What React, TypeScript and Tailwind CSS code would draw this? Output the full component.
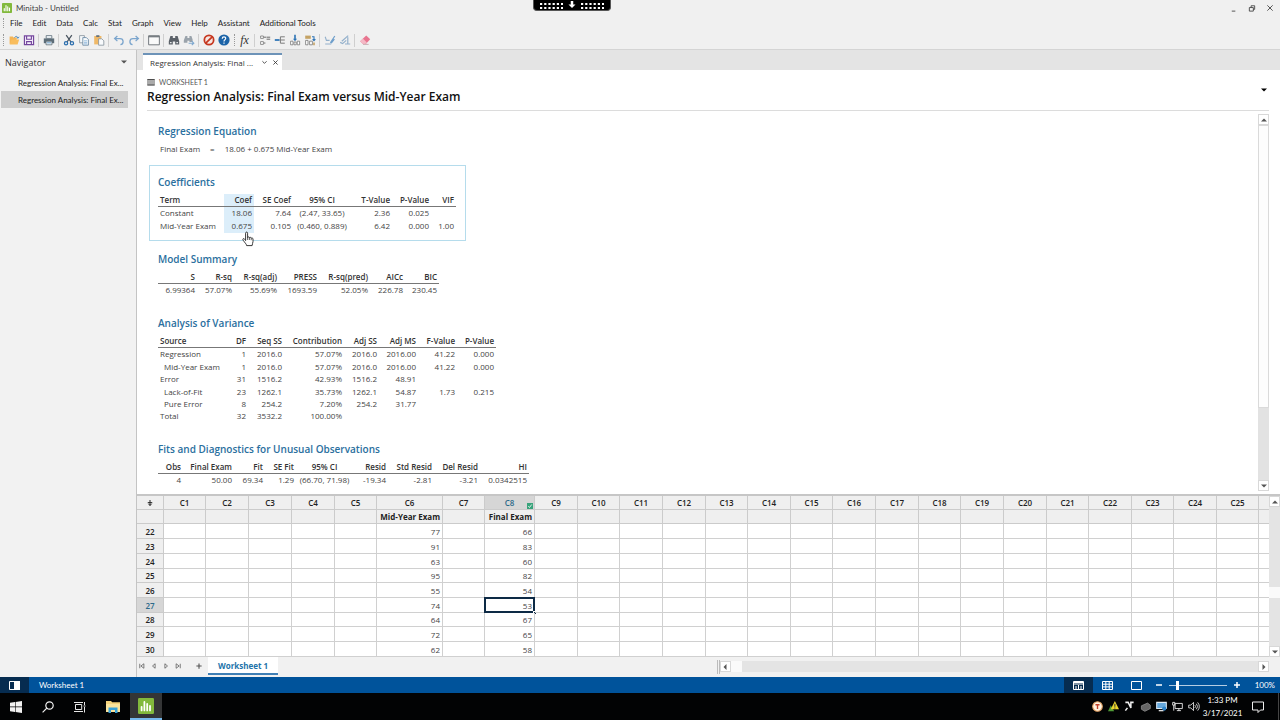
import React from "react";
import clsx from "clsx";

type Align = "left" | "center" | "right";
type Column = { label: string; width: string; align: Align };
type Row = { cells: string[]; indent?: boolean };

const alignClass: Record<Align, string> = {
  left: "text-left",
  center: "text-center",
  right: "text-right",
};

const col = (label: string, width: string, align: Align = "right"): Column => ({ label, width, align });

function StatTable({ label, columns, rows, highlight }: { label: string; columns: Column[]; rows: Row[]; highlight?: number }) {
  return (
    <table aria-label={label} className="table-fixed border-separate border-spacing-0 text-[8px] leading-[12px] whitespace-nowrap">
      <colgroup>
        {columns.map((c) => (
          <col key={c.label} className={c.width} />
        ))}
      </colgroup>
      <thead>
        <tr>
          {columns.map((c, i) => (
            <th
              key={c.label}
              scope="col"
              className={clsx(
                "border-b border-[#777] px-0.5 py-0 font-semibold text-[#333]",
                alignClass[c.align],
                i === highlight && "bg-[#dceefa]",
              )}
            >
              {c.label}
            </th>
          ))}
        </tr>
      </thead>
      <tbody className="text-[#444]">
        {rows.map((r, ri) => (
          <tr key={ri} className={r.indent ? "h-[12px]" : "h-[13px]"}>
            {r.cells.map((v, i) => (
              <td
                key={i}
                className={clsx(
                  "py-0 pr-0.5 align-top",
                  i === 0 && r.indent ? "pl-1.5" : "pl-0.5",
                  alignClass[columns[i].align],
                  i === highlight && "bg-[#dceefa]",
                )}
              >
                {v}
              </td>
            ))}
          </tr>
        ))}
      </tbody>
    </table>
  );
}

function Section({ title, selected, children }: { title: string; selected?: boolean; children: React.ReactNode }) {
  return (
    <section className={clsx("relative w-fit border pt-2 pr-[9px] pb-[7px] pl-2", selected ? "border-[#b5dcec]" : "border-transparent")}>
      <h2 className="mb-1 text-[10px] leading-4 font-semibold text-[#2a6f9e]">{title}</h2>
      {children}
    </section>
  );
}

function HandCursor() {
  return (
    <svg className="absolute top-[65px] left-[92px] h-4 w-3" viewBox="0 0 12 16" aria-hidden="true">
      <path
        d="M3.6 9.6V2.2c0-1.5 2-1.5 2 0v4.2c.4-.8 1.7-.6 1.8.3.5-.7 1.7-.4 1.8.5.6-.5 1.8-.2 1.8.8v2.6c0 1.6-.9 2.2-.9 4H4.6c0-1.300-1.300-2.300-2.200-3.700C1.500 9.700.3 8.600 1.100 7.800c.8-.7 1.700.3 2.500 1.800z"
        fill="#fff"
        stroke="#222"
        strokeWidth=".9"
      />
      <path d="M5.600 6v3M7.400 6.600v2.400M9.200 7.200v2" stroke="#222" strokeWidth=".7" fill="none" />
    </svg>
  );
}

function Arrow({ dir, className = "text-[#555]" }: { dir: "up" | "down" | "left" | "right"; className?: string }) {
  const d = { up: "M0 6h8L4 2z", down: "M0 2h8L4 6z", left: "M6 0v8L2 4z", right: "M2 0v8l4-4z" }[dir];
  return (
    <svg viewBox="0 0 8 8" className={clsx("size-1.5 fill-current", className)} aria-hidden="true">
      <path d={d} />
    </svg>
  );
}

function ScrollButton({ dir, label }: { dir: "up" | "down" | "left" | "right"; label: string }) {
  return (
    <button type="button" aria-label={label} className="flex size-[11px] shrink-0 items-center justify-center border border-[#d8d8d8] bg-white">
      <Arrow dir={dir} />
    </button>
  );
}

const icons: Record<string, React.ReactNode> = {
  Open: (
    <>
      <path d="M2 12.500V3h4l1 1.500h4V7" fill="#f5b556" />
      <path d="M4.500 7H14l-2 6H2z" fill="#f9bd5d" />
      <path d="M8 4.500c2-2.500 4-1.500 4.500.5M10.800 4l1.800 1.400L13.800 3.500" fill="none" stroke="#3a7cb8" />
    </>
  ),
  Save: (
    <>
      <path d="M1.800 2.300h11.400v11H1.800z" fill="#f5effa" stroke="#74469d" strokeWidth="1.500" />
      <path d="M4.500 2.500v4h6v-4M4.500 13v-3.500h6V13" fill="none" stroke="#74469d" strokeWidth="1.400" />
    </>
  ),
  Print: (
    <>
      <path d="M1 5.500h13v6H1z" fill="#5d6d78" />
      <path d="M4 2h7v3.500H4zM3.800 9h7.400v4.500H3.800z" fill="#eef4f8" stroke="#5d6d78" />
      <path d="M5 11h5" stroke="#4b8ac0" />
    </>
  ),
  Cut: (
    <>
      <path d="M4 1.500l6 8.500M11 1.500L5 10" stroke="#4a5560" strokeWidth="1.600" fill="none" />
      <circle cx="3.800" cy="11.500" r="2" fill="none" stroke="#2c6fae" strokeWidth="1.600" />
      <circle cx="11.200" cy="11.500" r="2" fill="none" stroke="#2c6fae" strokeWidth="1.600" />
    </>
  ),
  Copy: (
    <>
      <path d="M2 2h6v9H2z" fill="#f5f8fa" stroke="#84909a" />
      <path d="M6 4.500h4.500l2.500 2.500v7H6z" fill="#f8fbfd" stroke="#5d7f9d" />
      <path d="M7.500 8.500h4M7.500 10.500h4M7.500 12.300h4" stroke="#6c9fce" strokeWidth=".8" />
    </>
  ),
  Paste: (
    <>
      <path d="M1.500 2.500h9v10.500h-9z" fill="#efb867" />
      <path d="M4 1.500h4v2.300H4z" fill="#66717a" />
      <path d="M7 6h4l2.500 2.500V14H7z" fill="#f8fafc" stroke="#84909a" />
    </>
  ),
  Undo: <path d="M5.500 2.500L2 5.700l3.500 3.200M2.300 5.700h6.500c5 0 5 7 .5 7.500" fill="none" stroke="#7ba5cd" strokeWidth="1.600" />,
  Redo: <path d="M9.500 2.500L13 5.700 9.500 8.900M12.700 5.700H6.200c-5 0-5 7-.5 7.500" fill="none" stroke="#7ba5cd" strokeWidth="1.600" />,
  Window: (
    <>
      <path d="M.8 2.200h13.400v11.300H.8z" fill="#fafafa" stroke="#70767b" strokeWidth="1.200" />
      <path d="M.8 2.200h13.400v2H.8z" fill="#777d82" />
    </>
  ),
  Find: (
    <>
      <path d="M3 2.500h3V5h3V2.500h3L14 9v4H9V9.500H6V13H1V9z" fill="#5b6168" />
      <path d="M2.500 10h2v1.500h-2zM10.500 10h2v1.500h-2z" fill="#e5e8ea" />
    </>
  ),
  Replace: (
    <>
      <path d="M3 2.500h2.500V5H8V2.500h2.500L12 7v3H8V8.500H5.500V11H1V8z" fill="#9aa3ab" />
      <path d="M7 11.500h6M11 9l2.500 2.500L11 14" fill="none" stroke="#7fa9d0" strokeWidth="1.400" />
    </>
  ),
  Cancel: (
    <>
      <circle cx="7.500" cy="7.500" r="5.800" fill="#f7e7e3" stroke="#c6371f" strokeWidth="2.200" />
      <path d="M11.500 3.500l-8 8" stroke="#c6371f" strokeWidth="2.200" />
    </>
  ),
  Help: (
    <>
      <circle cx="7.500" cy="7.500" r="7" fill="#1c64a8" />
      <path d="M5.300 5.800c0-3 4.500-2.800 4.300-.2C9.500 7.300 7.500 7 7.500 9.300M7.500 10.500v1.800" fill="none" stroke="#fff" strokeWidth="1.500" />
    </>
  ),
  "Sum columns": (
    <>
      <path d="M2 2.500h3.500v3H2zM2 9.500h3.500v3.500H2z" fill="#fff" stroke="#777" />
      <path d="M6 4h3M9.500 4H14M9.500 6.500H14M6 11.300h2" stroke="#666" strokeWidth="1.200" />
    </>
  ),
  "Split rows": (
    <>
      <path d="M1 7.500h6" stroke="#2c73b5" strokeWidth="2.200" />
      <path d="M8 3.500h5.500M8 7.500h5.500M8 11.500h5.500M8 3.500v8" stroke="#777" strokeWidth="1.200" fill="none" />
    </>
  ),
  "Insert rows": (
    <>
      <path d="M7.500 1v6.500" stroke="#2c73b5" strokeWidth="2" />
      <path d="M5 6h5l-2.500 3z" fill="#2c73b5" />
      <path d="M2 9h3v4.500H2zM6.300 10h2.700v3.500H6.300zM10.300 9h3v4.500h-3z" fill="#fff" stroke="#777" />
    </>
  ),
  "Move columns": (
    <>
      <path d="M1.500 2h7v4h-7z" fill="#c4a264" />
      <path d="M10 3.500h2.500V8M10.800 6.500l1.700 2 1.700-2" fill="none" stroke="#2c73b5" strokeWidth="1.300" />
      <path d="M2 8h3v5.500H2zM7 9h3.500v4.500H7z" fill="#fff" stroke="#777" />
      <path d="M11.500 10.500h2V14h-2z" fill="#c4a264" />
    </>
  ),
  "Assign formula": (
    <>
      <path d="M1.500 3.500l1.500 4.500h4M1.500 12.500H9" fill="none" stroke="#93b0cb" strokeWidth="1.400" />
      <path d="M8 11l5.500-8.500M9 11.500l4-5" fill="none" stroke="#6f9fcb" strokeWidth="1.500" />
    </>
  ),
  "Edit formula": <path d="M3.500 9l8-7M1.500 10.500l3 1.500L9 8M11 4v9M7.500 12.500H14" fill="none" stroke="#93b0cb" strokeWidth="1.500" />,
  Erase: (
    <>
      <path d="M9 2l5 4.500-5.500 6H5L1.500 9z" fill="#e8758f" />
      <path d="M1.500 9L4.800 5.700l5 4.800-1.800 2H5z" fill="#f5b8c5" />
      <path d="M5 13h7" stroke="#b2848e" strokeWidth=".8" />
    </>
  ),
};

function ToolIcon({ name }: { name: string }) {
  return (
    <button type="button" aria-label={name} className="flex h-4 w-[15px] items-center justify-center">
      {name === "Formula" ? (
        <span className="font-['Liberation_Serif',serif] text-[12px] leading-none text-[#333] italic">fx</span>
      ) : (
        <svg viewBox="0 0 15 15" className="size-3" aria-hidden="true">
          {icons[name]}
        </svg>
      )}
    </button>
  );
}

function Grip() {
  return <span className="mx-0.5 h-3 w-0 border-l border-dotted border-[#999]" />;
}

const toolGroups = [
  ["Open", "Save"],
  ["Print"],
  ["Cut", "Copy", "Paste"],
  ["Undo", "Redo"],
  ["Window"],
  ["Find", "Replace"],
  ["Cancel", "Help"],
];
const formulaGroups = [
  ["Formula"],
  ["Sum columns", "Split rows", "Insert rows", "Move columns"],
  ["Assign formula", "Edit formula"],
  ["Erase"],
];

function ToolGroups({ groups }: { groups: string[][] }) {
  return (
    <>
      {groups.map((g, i) => (
        <React.Fragment key={i}>
          {i > 0 && <span className="mx-0.5 h-[13px] w-px bg-[#cfcfcf]" />}
          {g.map((n) => (
            <ToolIcon key={n} name={n} />
          ))}
        </React.Fragment>
      ))}
    </>
  );
}

function MinitabLogo({ className }: { className: string }) {
  return (
    <svg viewBox="0 0 20 20" className={className} aria-hidden="true">
      <rect width="20" height="20" rx="1.500" fill="#82b93c" />
      <path d="M4.500 15.500V11M8 15.500V5M11.500 15.500V7.500M15 15.500V10" stroke="#fff" strokeWidth="2.200" strokeLinecap="round" />
    </svg>
  );
}

const menus = ["File", "Edit", "Data", "Calc", "Stat", "Graph", "View", "Help", "Assistant", "Additional Tools"];

const midYear = ["77", "91", "63", "95", "55", "74", "64", "72", "62"];
const finalExam = ["66", "83", "60", "82", "54", "53", "67", "65", "58"];
const rowHeights = ["h-[15px]", "h-[15px]", "h-[15px]", "h-[14px]", "h-[15px]", "h-[15px]", "h-[14px]", "h-[15px]", "h-[15px]"];

const sheetColumns = Array.from({ length: 25 }, (_, i) => {
  const n = i + 1;
  const width = n === 6 ? "w-[66px]" : n === 8 ? "w-[50px]" : [1, 5, 7, 10, 13, 15, 18, 21, 23, 25].includes(n) ? "w-[42px]" : "w-[43px]";
  return { id: `C${n}`, width, name: n === 6 ? "Mid-Year Exam" : n === 8 ? "Final Exam" : "" };
});

function Worksheet() {
  return (
    <table aria-label="Worksheet 1" className="w-full table-fixed border-separate border-spacing-0 text-[8px] leading-[12px] whitespace-nowrap">
      <colgroup>
        <col className="w-[27px]" />
        {sheetColumns.map((c) => (
          <col key={c.id} className={c.width} />
        ))}
        <col />
      </colgroup>
      <thead>
        <tr className="h-[14px] bg-[#efefef] text-[#222]">
          <th className="border-r border-b border-[#cbcbcb] p-0">
            <svg viewBox="0 0 8 8" className="mx-auto size-1.5" aria-label="Data direction down">
              <path d="M4 0v7M1 3.500h6M2 5l2 2.500L6 5" fill="none" stroke="#222" strokeWidth="1.300" />
            </svg>
          </th>
          {sheetColumns.map((c) => (
            <th
              key={c.id}
              scope="col"
              className={clsx("relative border-r border-b border-[#cbcbcb] p-0 pt-px font-semibold", c.id === "C8" && "bg-[#d6d6d6] text-[#2c6a8a]")}
            >
              {c.id}
              {c.id === "C8" && (
                <svg viewBox="0 0 6 6" className="absolute right-px bottom-0 size-1.5" aria-hidden="true">
                  <path d="M0 0h6v6H0z" fill="#39a37b" />
                  <path d="M1.300 3l1.200 1.500 2.200-3" fill="none" stroke="#fff" strokeWidth=".8" />
                </svg>
              )}
            </th>
          ))}
          <th className="border-b border-[#cbcbcb] p-0" />
        </tr>
        <tr className="h-[14px] bg-[#efefef] text-[#222]">
          <th className="border-r border-b border-[#cbcbcb] p-0" />
          {sheetColumns.map((c) => (
            <th key={c.id} className="overflow-hidden border-r border-b border-[#cbcbcb] pt-px pr-0.5 pb-0 pl-0 text-right font-bold">
              {c.name}
            </th>
          ))}
          <th className="border-b border-[#cbcbcb] p-0" />
        </tr>
      </thead>
      <tbody className="bg-white text-[#444]">
        {midYear.map((m, i) => {
          const n = 22 + i;
          return (
            <tr key={n} className={rowHeights[i]}>
              <th
                scope="row"
                className={clsx(
                  "border-r border-b border-[#cbcbcb] p-0 pt-px font-semibold",
                  n === 27 ? "bg-[#d6d6d6] text-[#2c6a8a]" : "bg-[#efefef] text-[#222]",
                )}
              >
                {n}
              </th>
              {sheetColumns.map((c) => {
                const active = n === 27 && c.id === "C8";
                return (
                  <td key={c.id} className="relative border-r border-b border-[#d0d0d0] pt-px pr-0.5 pb-0 pl-0 text-right">
                    {c.id === "C6" ? m : c.id === "C8" ? finalExam[i] : ""}
                    {active && (
                      <span className="pointer-events-none absolute -inset-px border-2 border-[#0d2a45]">
                        <span className="absolute -right-[3px] -bottom-[3px] size-[3px] border-t border-l border-white bg-[#0d2a45]" />
                      </span>
                    )}
                  </td>
                );
              })}
              <td className="border-b border-[#d0d0d0] p-0" />
            </tr>
          );
        })}
      </tbody>
    </table>
  );
}

function Tray() {
  return (
    <div className="flex items-center">
      {[
        <>
          <circle cx="8" cy="8" r="7" fill="#fff2e0" stroke="#e2a060" strokeWidth="1.500" />
          <path d="M5 5.500h6M8 5.500v6" stroke="#c14129" strokeWidth="2" />
        </>,
        <>
          <path d="M0 15l4-9 5 9z" fill="#4f9a36" />
          <path d="M10 0l6 12H4z" fill="#ebd52d" />
          <path d="M10 4v4.500M10 9.500v1.500" stroke="#333" strokeWidth="1.500" />
        </>,
        <path d="M2 2h4l4 8V2h4M2 14l3-4" fill="none" stroke="#eee" strokeWidth="2.200" />,
        <path d="M2 7l9-4 4 3v5l-8 4-5-3z" fill="#666" stroke="#999" />,
        <>
          <path d="M1 2h14v9H1z" fill="#65a8dc" stroke="#dfeaf2" strokeWidth="1.500" />
          <path d="M4 14h7" stroke="#ddd" strokeWidth="2" />
          <circle cx="12" cy="11" r="3" fill="#2d83c8" />
        </>,
        <path d="M4.500 3.500H15v7.500H4.500V3.500M10 11v3M7 14h6M1 2h3v4H1zM2.500 6v8" fill="none" stroke="#eee" strokeWidth="1.300" />,
        <path d="M1 6h3l4-4v12l-4-4H1zM10 6q2 2 0 4M12 4q4 4 0 8M14 2q5 6 0 12" fill="none" stroke="#eee" strokeWidth="1.200" />,
      ].map((icon, i) => (
        <button
          key={i}
          type="button"
          aria-label={["Updates", "Alerts", "Network client", "Device", "Display", "Ethernet", "Volume"][i]}
          className="flex w-4 justify-center"
        >
          <svg viewBox="0 0 16 16" className="size-[11px] overflow-visible" aria-hidden="true">
            {icon}
          </svg>
        </button>
      ))}
    </div>
  );
}

export default function App() {
  return (
    <div className="relative flex h-screen flex-col overflow-hidden bg-[#f0f0f0] font-['Open_Sans','Noto_Sans',sans-serif] text-[8px] leading-[12px] text-[#222]">
      <div className="absolute top-0 left-1/2 flex h-[11px] w-[78px] -translate-x-[107px] items-center justify-center rounded-b-sm border border-t-0 border-[#555] bg-black">
        <svg viewBox="0 0 66 9" className="h-[9px] w-[66px]" aria-hidden="true">
          <path d="M1 3h23M42 3h23M1 7h23M42 7h23" stroke="#fff" strokeWidth="2" strokeDasharray="2.200 2" />
          <path d="M33 0v4" stroke="#fff" strokeWidth="2.500" />
          <path d="M29.500 3.500h7L33 7z" fill="#fff" />
        </svg>
      </div>

      <header className="shrink-0 border-b border-[#d4d4d4]">
        <div className="flex h-[15px] items-center justify-between pr-[5px] pl-0.5">
          <div className="flex items-center gap-1">
            <MinitabLogo className="size-2.5" />
            <h1 className="font-['Lato',sans-serif] text-[8px] text-[#444]">Minitab - Untitled</h1>
          </div>
          <div className="flex gap-2">
            {["M2 8h4", "M1.500 4h4.500v4H1.500zM3.500 4V2h4v4H6", "M1.500 1.500l6 6M7.500 1.500l-6 6"].map((d, i) => (
              <button key={d} type="button" aria-label={["Minimize", "Restore", "Close"][i]} className="flex w-2.5 justify-center">
                <svg viewBox="0 0 9 9" className="size-2" fill="none" stroke="#444" aria-hidden="true">
                  <path d={d} />
                </svg>
              </button>
            ))}
          </div>
        </div>
        <nav className="flex h-4 items-center gap-2.5 pl-[3px] font-['Lato',sans-serif]">
          <span className="-mr-1 h-2.5 border-l border-dotted border-[#999]" />
          {menus.map((m) => (
            <button key={m} type="button">
              {m}
            </button>
          ))}
        </nav>
        <div className="flex h-[18px] items-center pl-px">
          <Grip />
          <ToolGroups groups={toolGroups} />
          <span className="w-px" />
          <Grip />
          <ToolGroups groups={formulaGroups} />
        </div>
      </header>

      <div className="flex min-h-0 flex-1">
        <aside className="w-[137px] shrink-0 border-r border-[#c4c4c4] bg-[#f2f2f2]">
          <div className="flex h-6 items-center justify-between pr-[9px] pl-[5px]">
            <h2 className="pt-px text-[9px] text-[#333]">Navigator</h2>
            <Arrow dir="down" />
          </div>
          <ul className="px-px font-['Lato',sans-serif]">
            {[false, true].map((on, i) => (
              <li key={i} className="mr-[7px]">
                <button type="button" className={clsx("h-[17px] w-full pl-[17px] text-left whitespace-nowrap", on && "bg-[#cdcdcd]")}>
                  Regression Analysis: Final Ex...
                </button>
              </li>
            ))}
          </ul>
        </aside>

        <main className="flex min-w-0 flex-1 flex-col">
          <div className="flex h-5 shrink-0 items-end bg-[#e4e4e4] pl-1.5">
            <div className="flex h-[17px] items-center border-t-2 border-[#6d93b8] bg-white pr-1 pl-[7px] text-[#333]">
              <span className="w-[110px] whitespace-nowrap">Regression Analysis: Final ...</span>
              <button type="button" aria-label="Tab menu" className="flex w-2 justify-center">
                <svg viewBox="0 0 6 6" className="size-[5px]" fill="none" stroke="#333" aria-hidden="true">
                  <path d="M.5 1.500L3 4l2.500-2.500" />
                </svg>
              </button>
              <button type="button" aria-label="Close tab" className="ml-1 flex w-1.5 justify-center">
                <svg viewBox="0 0 6 6" className="size-[5px]" fill="none" stroke="#333" aria-hidden="true">
                  <path d="M.5.5l5 5M5.500.5l-5 5" />
                </svg>
              </button>
            </div>
          </div>

          <div className="flex min-h-0 flex-1 flex-col bg-white pr-[11px]">
            <div className="ml-2.5 flex shrink-0 items-center justify-between border-b border-[#dcdcdc] pt-1.5 pr-0.5 pb-1">
              <div>
                <p className="flex items-center gap-1 text-[#555]">
                  <svg viewBox="0 0 8 8" className="size-2" aria-hidden="true">
                    <path d="M1 1v6.500M3 1v6.500M5 1v6.500M7 1v6.500M.5 1.500h7M.5 7h7" fill="none" stroke="#444" strokeWidth=".9" />
                  </svg>
                  <span className="font-['Lato',sans-serif] text-[7px]">WORKSHEET 1</span>
                </p>
                <h1 className="text-[12px] leading-[18px] font-semibold text-[#111]">Regression Analysis: Final Exam versus Mid-Year Exam</h1>
              </div>
              <button type="button" aria-label="Output options" className="mb-0.5 flex">
                <Arrow dir="down" className="text-black" />
              </button>
            </div>

            <div className="flex min-h-0 flex-1 justify-between">
              <div className="flex min-w-0 flex-1 flex-col gap-px overflow-hidden pt-[3px] pl-3">
                <Section title="Regression Equation">
                  <div className="flex h-[13px] items-start gap-2.5 pl-0.5 text-[#444]">
                    <span>Final Exam</span>
                    <span>=</span>
                    <span>18.06 + 0.675 Mid-Year Exam</span>
                  </div>
                </Section>
                <Section title="Coefficients" selected>
                  <StatTable
                    label="Coefficients"
                    highlight={1}
                    columns={[
                      col("Term", "w-[66px]", "left"),
                      col("Coef", "w-[30px]"),
                      col("SE Coef", "w-[39px]"),
                      col("95% CI", "w-[58px]", "center"),
                      col("T-Value", "w-[41px]"),
                      col("P-Value", "w-[39px]"),
                      col("VIF", "w-[25px]"),
                    ]}
                    rows={[
                      { cells: ["Constant", "18.06", "7.64", "(2.47, 33.65)", "2.36", "0.025", ""] },
                      { cells: ["Mid-Year Exam", "0.675", "0.105", "(0.460, 0.889)", "6.42", "0.000", "1.00"] },
                    ]}
                  />
                  <HandCursor />
                </Section>
                <Section title="Model Summary">
                  <StatTable
                    label="Model Summary"
                    columns={[
                      col("S", "w-[39px]"),
                      col("R-sq", "w-[37px]"),
                      col("R-sq(adj)", "w-[45px]"),
                      col("PRESS", "w-[40px]"),
                      col("R-sq(pred)", "w-[51px]"),
                      col("AICc", "w-[35px]"),
                      col("BIC", "w-[34px]"),
                    ]}
                    rows={[{ cells: ["6.99364", "57.07%", "55.69%", "1693.59", "52.05%", "226.78", "230.45"] }]}
                  />
                </Section>
                <Section title="Analysis of Variance">
                  <StatTable
                    label="Analysis of Variance"
                    columns={[
                      col("Source", "w-[72px]", "left"),
                      col("DF", "w-[18px]"),
                      col("Seq SS", "w-[36px]"),
                      col("Contribution", "w-[60px]"),
                      col("Adj SS", "w-[35px]"),
                      col("Adj MS", "w-[39px]"),
                      col("F-Value", "w-[39px]"),
                      col("P-Value", "w-[39px]"),
                    ]}
                    rows={[
                      { cells: ["Regression", "1", "2016.0", "57.07%", "2016.0", "2016.00", "41.22", "0.000"] },
                      { cells: ["Mid-Year Exam", "1", "2016.0", "57.07%", "2016.0", "2016.00", "41.22", "0.000"], indent: true },
                      { cells: ["Error", "31", "1516.2", "42.93%", "1516.2", "48.91", "", ""] },
                      { cells: ["Lack-of-Fit", "23", "1262.1", "35.73%", "1262.1", "54.87", "1.73", "0.215"], indent: true },
                      { cells: ["Pure Error", "8", "254.2", "7.20%", "254.2", "31.77", "", ""] },
                      { cells: ["Total", "32", "3532.2", "100.00%", "", "", "", ""] },
                    ].map((r) => (r.cells[0] === "Pure Error" ? { ...r, indent: true } : r))}
                  />
                </Section>
                <Section title="Fits and Diagnostics for Unusual Observations">
                  <StatTable
                    label="Fits and Diagnostics"
                    columns={[
                      col("Obs", "w-[25px]"),
                      col("Final Exam", "w-[51px]"),
                      col("Fit", "w-[31px]"),
                      col("SE Fit", "w-[31px]"),
                      col("95% CI", "w-[57px]", "center"),
                      col("Resid", "w-[35px]"),
                      col("Std Resid", "w-[46px]"),
                      col("Del Resid", "w-[46px]"),
                      col("HI", "w-[49px]"),
                    ]}
                    rows={[{ cells: ["4", "50.00", "69.34", "1.29", "(66.70, 71.98)", "-19.34", "-2.81", "-3.21", "0.0342515"] }]}
                  />
                </Section>
              </div>
              <div className="mt-[3px] mb-[3px] flex w-[11px] shrink-0 flex-col bg-[#e2e2e2]">
                <ScrollButton dir="up" label="Scroll output up" />
                <div className="h-3/4 border border-[#dadada] bg-[#fdfdfd]" />
                <div className="flex-1" />
                <ScrollButton dir="down" label="Scroll output down" />
              </div>
            </div>
          </div>

          <div className="flex shrink-0 border-t-2 border-[#c6c6c6]">
            <div className="min-w-0 flex-1 overflow-hidden">
              <Worksheet />
            </div>
            <div className="flex w-[11px] shrink-0 flex-col bg-[#e4e4e4]">
              <ScrollButton dir="up" label="Scroll worksheet up" />
              <div className="flex-[5]" />
              <div className="h-[11px] bg-[#fafafa]" />
              <div className="flex-[3]" />
              <ScrollButton dir="down" label="Scroll worksheet down" />
            </div>
          </div>

          <div className="flex h-5 shrink-0 bg-[#f1f1f1]">
            <div className="flex items-center gap-1.5 pr-1.5 pb-0.5 pl-0.5 text-[#555]">
              {["M1 1v6M6.500 1L2.500 4l4 3z", "M5.500 1L2 4l3.500 3z", "M2.500 1L6 4 2.500 7z", "M7 1v6M1.500 1l4 3-4 3z"].map((d, i) => (
                <button key={d} type="button" aria-label={["First sheet", "Previous sheet", "Next sheet", "Last sheet"][i]}>
                  <svg viewBox="0 0 8 8" className="size-1.5" fill="none" stroke="currentColor" aria-hidden="true">
                    <path d={d} />
                  </svg>
                </button>
              ))}
              <button type="button" aria-label="Add sheet" className="ml-[9px]">
                <svg viewBox="0 0 8 8" className="size-1.5" fill="none" stroke="currentColor" strokeWidth="1.500" aria-hidden="true">
                  <path d="M4 .5v7M.5 4h7" />
                </svg>
              </button>
            </div>
            <button type="button" className="h-[18px] border-b-2 border-[#3f7fb5] bg-white px-2.5 pt-0.5 font-bold text-[#2273aa]">
              Worksheet 1
            </button>
            <div className="flex-1" />
            <div className="flex h-5 w-[calc(50%-8px)] items-center pr-[11px] pb-px">
              <span className="h-3.5 w-[3px] shrink-0 border-x border-[#bbb]" />
              <ScrollButton dir="left" label="Scroll worksheet left" />
              <div className="flex h-[11px] flex-1 bg-[#e4e4e4]">
                <div className="w-[11px] bg-[#fafafa]" />
              </div>
              <ScrollButton dir="right" label="Scroll worksheet right" />
            </div>
          </div>
        </main>
      </div>

      <div className="flex h-4 shrink-0 items-center justify-between bg-[#00539b] font-['Lato',sans-serif] text-white">
        <div className="flex h-full items-center gap-2.5">
          <button type="button" aria-label="Toggle navigator" className="flex h-full w-[29px] items-center justify-center bg-[#062c50]">
            <svg viewBox="0 0 11 9" className="h-[9px] w-[11px]" aria-hidden="true">
              <path d="M.5.5h10v8H.5z" fill="none" stroke="#fff" />
              <path d="M5 0h6v9H5z" fill="#fff" />
            </svg>
          </button>
          <span>Worksheet 1</span>
        </div>
        <div className="flex h-full items-center pr-[5px]">
          {[
            "M.5.5h10v8H.5zM.5 1.500h10M.5 3h10M3 5v3.500M5.500 4v4.500M8 5v3.500",
            "M.5.5h10v8H.5zM.5 3.200h10M.5 5.900h10M3.800.5v8M7.200.5v8",
            "M.5.5h10v8H.5z",
          ].map((d, i) => (
            <button
              key={d}
              type="button"
              aria-label={["Split view", "Worksheet view", "Output view"][i]}
              className={clsx("flex h-full w-[29px] items-center justify-center", i === 0 && "bg-[#062c50]")}
            >
              <svg viewBox="0 0 11 9" className="h-[9px] w-[11px]" fill="none" stroke="#fff" aria-hidden="true">
                <path d={d} />
              </svg>
            </button>
          ))}
          <button type="button" aria-label="Zoom out" className="ml-1 flex size-2 items-center justify-center">
            <svg viewBox="0 0 6 6" className="size-1.5" stroke="#fff" strokeWidth="1.500" aria-hidden="true">
              <path d="M0 3h6" />
            </svg>
          </button>
          <input
            type="range"
            aria-label="Zoom"
            min={0}
            max={100}
            defaultValue={14}
            className="mx-1.5 h-[9px] w-[58px] appearance-none bg-transparent [&::-webkit-slider-runnable-track]:h-px [&::-webkit-slider-runnable-track]:bg-[#b5cde3] [&::-webkit-slider-thumb]:-mt-1 [&::-webkit-slider-thumb]:h-[9px] [&::-webkit-slider-thumb]:w-[3px] [&::-webkit-slider-thumb]:appearance-none [&::-webkit-slider-thumb]:bg-white"
          />
          <button type="button" aria-label="Zoom in" className="flex size-2 items-center justify-center">
            <svg viewBox="0 0 6 6" className="size-1.5" stroke="#fff" strokeWidth="1.500" aria-hidden="true">
              <path d="M0 3h6M3 0v6" />
            </svg>
          </button>
          <span className="ml-3.5">100%</span>
        </div>
      </div>

      <footer className="flex h-[27px] shrink-0 items-stretch justify-between bg-[#020304] text-white">
        <div className="flex">
          <button type="button" aria-label="Start" className="flex w-8 items-center justify-center">
            <svg viewBox="0 0 12 12" className="size-3" fill="#f2f2f2" aria-hidden="true">
              <path d="M0 1.800L5 1v4.600H0zM5.600.9L12 0v5.600H5.600zM0 6.300h5V11l-5-.8zM5.600 6.300H12V12l-6.400-.9z" />
            </svg>
          </button>
          <button type="button" aria-label="Search" className="flex w-8 items-center justify-center">
            <svg viewBox="0 0 12 12" className="size-3" fill="none" stroke="#f2f2f2" strokeWidth="1.200" aria-hidden="true">
              <circle cx="7.500" cy="4.500" r="3.700" />
              <path d="M4.800 7.200L.6 11.400" />
            </svg>
          </button>
          <button type="button" aria-label="Task view" className="flex w-8 items-center justify-center">
            <svg viewBox="0 0 12 12" className="size-3" fill="none" stroke="#e8e8e8" aria-hidden="true">
              <path d="M1.500 3.500h6.200v5H1.500zM.5 1v1M.5 1.500h8M8.500 1v1M.5 10v1M.5 10.500h8M8.500 10v1M10.500 1v3M10.500 6v5.500M9.500 5h2" />
            </svg>
          </button>
          <button type="button" aria-label="File Explorer" className="flex w-[34px] items-center justify-center">
            <svg viewBox="0 0 14 12" className="h-3 w-3.5" aria-hidden="true">
              <path d="M0 0h5l1.200 1.300H14V11H0z" fill="#f4d27a" />
              <path d="M0 3h14v8H0z" fill="#fae49d" />
              <path d="M2.500 12V6.500h9V12H9V9H5v3z" fill="#39a2d8" />
            </svg>
          </button>
          <button type="button" aria-label="Minitab" className="flex w-8 items-center justify-center border-b-2 border-[#76b9ed] bg-[#343536]">
            <MinitabLogo className="size-4" />
          </button>
        </div>
        <div className="flex items-center font-['Lato',sans-serif]">
          <Tray />
          <time className="w-[43px] text-center leading-[13px]">
            1:33 PM
            <br />
            3/17/2021
          </time>
          <button type="button" aria-label="Notifications" className="mr-3.5 ml-2 flex">
            <svg viewBox="0 0 12 12" className="size-3" fill="none" stroke="#eee" aria-hidden="true">
              <path d="M.5 1h11v8H8.500L6 11.500V9H.5z" />
            </svg>
          </button>
          <span className="mr-px h-full w-px bg-[#444]" />
        </div>
      </footer>
    </div>
  );
}
